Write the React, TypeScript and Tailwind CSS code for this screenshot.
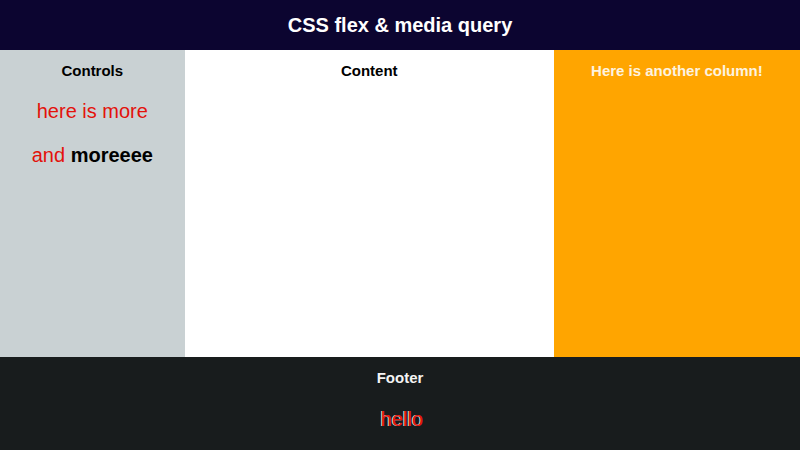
import React from "react";

export default function App() {
  return (
    <div className="flex h-[450px] w-[800px] flex-col" style={{ fontFamily: '"Liberation Sans", Arial, sans-serif' }}>
      <header className="flex h-[50px] shrink-0 items-center justify-center bg-[#0c0530]">
        <h1 className="text-[20px] font-bold leading-[24px] text-white">
          CSS flex &amp; media query
        </h1>
      </header>
      <main className="flex flex-1">
        <section className="flex flex-[3] flex-col items-center bg-[#c9d1d3] pt-[12px]">
          <h2 className="text-[15px] font-bold leading-[18px] text-black">Controls</h2>
          <p className="mt-[19px] text-[20px] leading-[24px] text-[#e3120b]">here is more</p>
          <p className="mt-[20px] text-[20px] leading-[24px] text-[#e3120b]">
            and <b className="text-black">moreeee</b>
          </p>
        </section>
        <section className="flex flex-[6] flex-col items-center bg-white pt-[12px]">
          <h2 className="text-[15px] font-bold leading-[18px] text-black">Content</h2>
        </section>
        <section className="flex flex-[4] flex-col items-center bg-[#ffa500] pt-[12px]">
          <h2 className="text-[15px] font-bold leading-[18px] text-[#fdf3e0]">Here is another column!</h2>
        </section>
      </main>
      <footer className="flex h-[93px] shrink-0 flex-col items-center bg-[#181c1d] pt-[12px]">
        <h2 className="text-[15px] font-bold leading-[18px] text-[#f4f4f4]">Footer</h2>
        <p className="mt-[20px] pl-[4px] text-[20px] leading-[24px] text-[#e3120b]" style={{ textShadow: "-1px 0 0 #e0e0e0" }}>
          hello
        </p>
      </footer>
    </div>
  );
}
